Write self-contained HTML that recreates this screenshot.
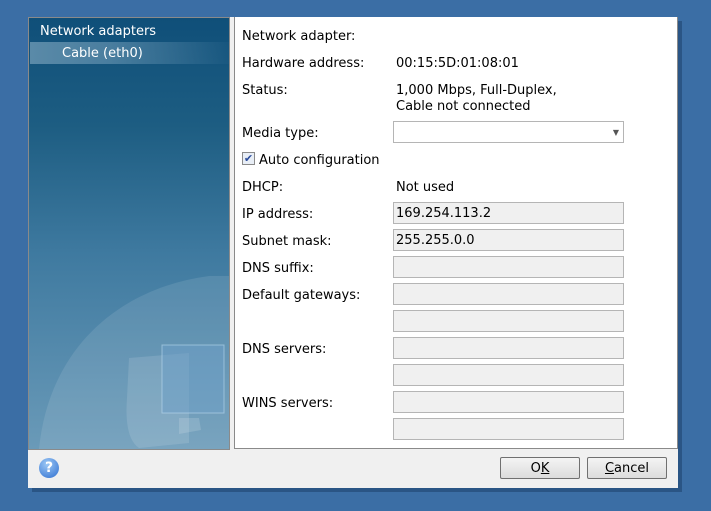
<!DOCTYPE html>
<html><head><style>
body{margin:0;width:711px;height:511px;background:#3b6ea5;position:relative;overflow:hidden;font-family:"DejaVu Sans",sans-serif;font-size:13px;color:#000}
.a{position:absolute}
.shadow{left:32px;top:21px;width:650px;height:471px;background:#2a5585}
.dlg{left:28px;top:17px;width:650px;height:471px;background:#f0f0f0}
.left{left:28px;top:17px;width:200px;height:431px;border:1px solid #8a8a8a;background:linear-gradient(#0f4f79 0%,#1d5d82 25%,#3f7aa0 55%,#6a9ab8 100%);overflow:hidden}
.right{left:234px;top:17px;width:442px;height:431px;border:1px solid #8a8a8a;border-top:none;background:#fff}
.lbl{position:absolute;left:242px;margin-top:2px}
.val{position:absolute;left:396px;margin-top:2px}
.box{position:absolute;left:393px;width:227px;height:20px;border:1px solid #b5b5b5;background:#f0f0f0;line-height:22px;padding-left:2px;box-sizing:content-box}
.btn{position:absolute;top:457px;width:78px;height:20px;border:1px solid #707070;border-radius:2px;background:linear-gradient(#f4f4f4,#dcdcdc);text-align:center;line-height:21px}
</style></head><body>
<div class="a shadow"></div>
<div class="a dlg"></div>
<div class="a left">
<div class="a" style="left:11px;top:6px;color:#fff">Network adapters</div>
<div class="a" style="left:1px;top:24px;width:199px;height:22px;background:linear-gradient(90deg,#5a8aa8,#4a7e9f 40%,rgba(40,100,140,0.2))"></div>
<div class="a" style="left:33px;top:28px;color:#fff">Cable (eth0)</div>
<svg class="a" style="left:0;top:0" width="200" height="431">
<path d="M10 431 C20 330 90 270 180 258 L200 258 L200 431Z" fill="rgba(255,255,255,0.1)"/>
<path d="M100 340 L160 335 L160 425 L110 430 Q95 420 98 380Z" fill="rgba(255,255,255,0.12)"/>
<rect x="133" y="327" width="62" height="68" fill="rgba(110,160,200,0.5)" stroke="rgba(200,230,250,0.5)"/>
<path d="M150 400 L170 400 L172 412 L150 416Z" fill="rgba(255,255,255,0.15)"/>
</svg>
</div>
<div class="a right"></div>
<div class="lbl" style="top:27px">Network adapter:</div>
<div class="lbl" style="top:54px">Hardware address:</div><div class="val" style="top:54px">00:15:5D:01:08:01</div>
<div class="lbl" style="top:81px">Status:</div><div class="val" style="top:81px;line-height:16px">1,000 Mbps, Full-Duplex,<br>Cable not connected</div>
<div class="lbl" style="top:124px">Media type:</div>
<div class="box" style="top:121px;background:#fff"><span style="position:absolute;right:4px;top:0;font-size:8px;color:#555">▼</span></div>
<div class="a" style="left:242px;top:152px;width:11px;height:11px;border:1px solid #8a8a8a;background:#e8eef6;font-size:11px;line-height:11px;text-align:center;color:#2a4a9a">✔</div>
<div class="a" style="left:259px;top:153px">Auto configuration</div>
<div class="lbl" style="top:178px">DHCP:</div><div class="val" style="top:178px">Not used</div>
<div class="lbl" style="top:205px">IP address:</div><div class="box" style="top:202px">169.254.113.2</div>
<div class="lbl" style="top:232px">Subnet mask:</div><div class="box" style="top:229px">255.255.0.0</div>
<div class="lbl" style="top:259px">DNS suffix:</div><div class="box" style="top:256px"></div>
<div class="lbl" style="top:286px">Default gateways:</div><div class="box" style="top:283px"></div>
<div class="box" style="top:310px"></div>
<div class="lbl" style="top:340px">DNS servers:</div><div class="box" style="top:337px"></div>
<div class="box" style="top:364px"></div>
<div class="lbl" style="top:394px">WINS servers:</div><div class="box" style="top:391px"></div>
<div class="box" style="top:418px"></div>
<div class="a" style="left:39px;top:458px;width:20px;height:20px;border-radius:50%;background:radial-gradient(circle at 40% 30%,#9cc8f5,#2f6fd0);color:#fff;font-weight:bold;font-size:14px;text-align:center;line-height:20px">?</div>
<div class="btn" style="left:500px"><span>O<u>K</u></span></div>
<div class="btn" style="left:587px"><u>C</u>ancel</div>
</body></html>
